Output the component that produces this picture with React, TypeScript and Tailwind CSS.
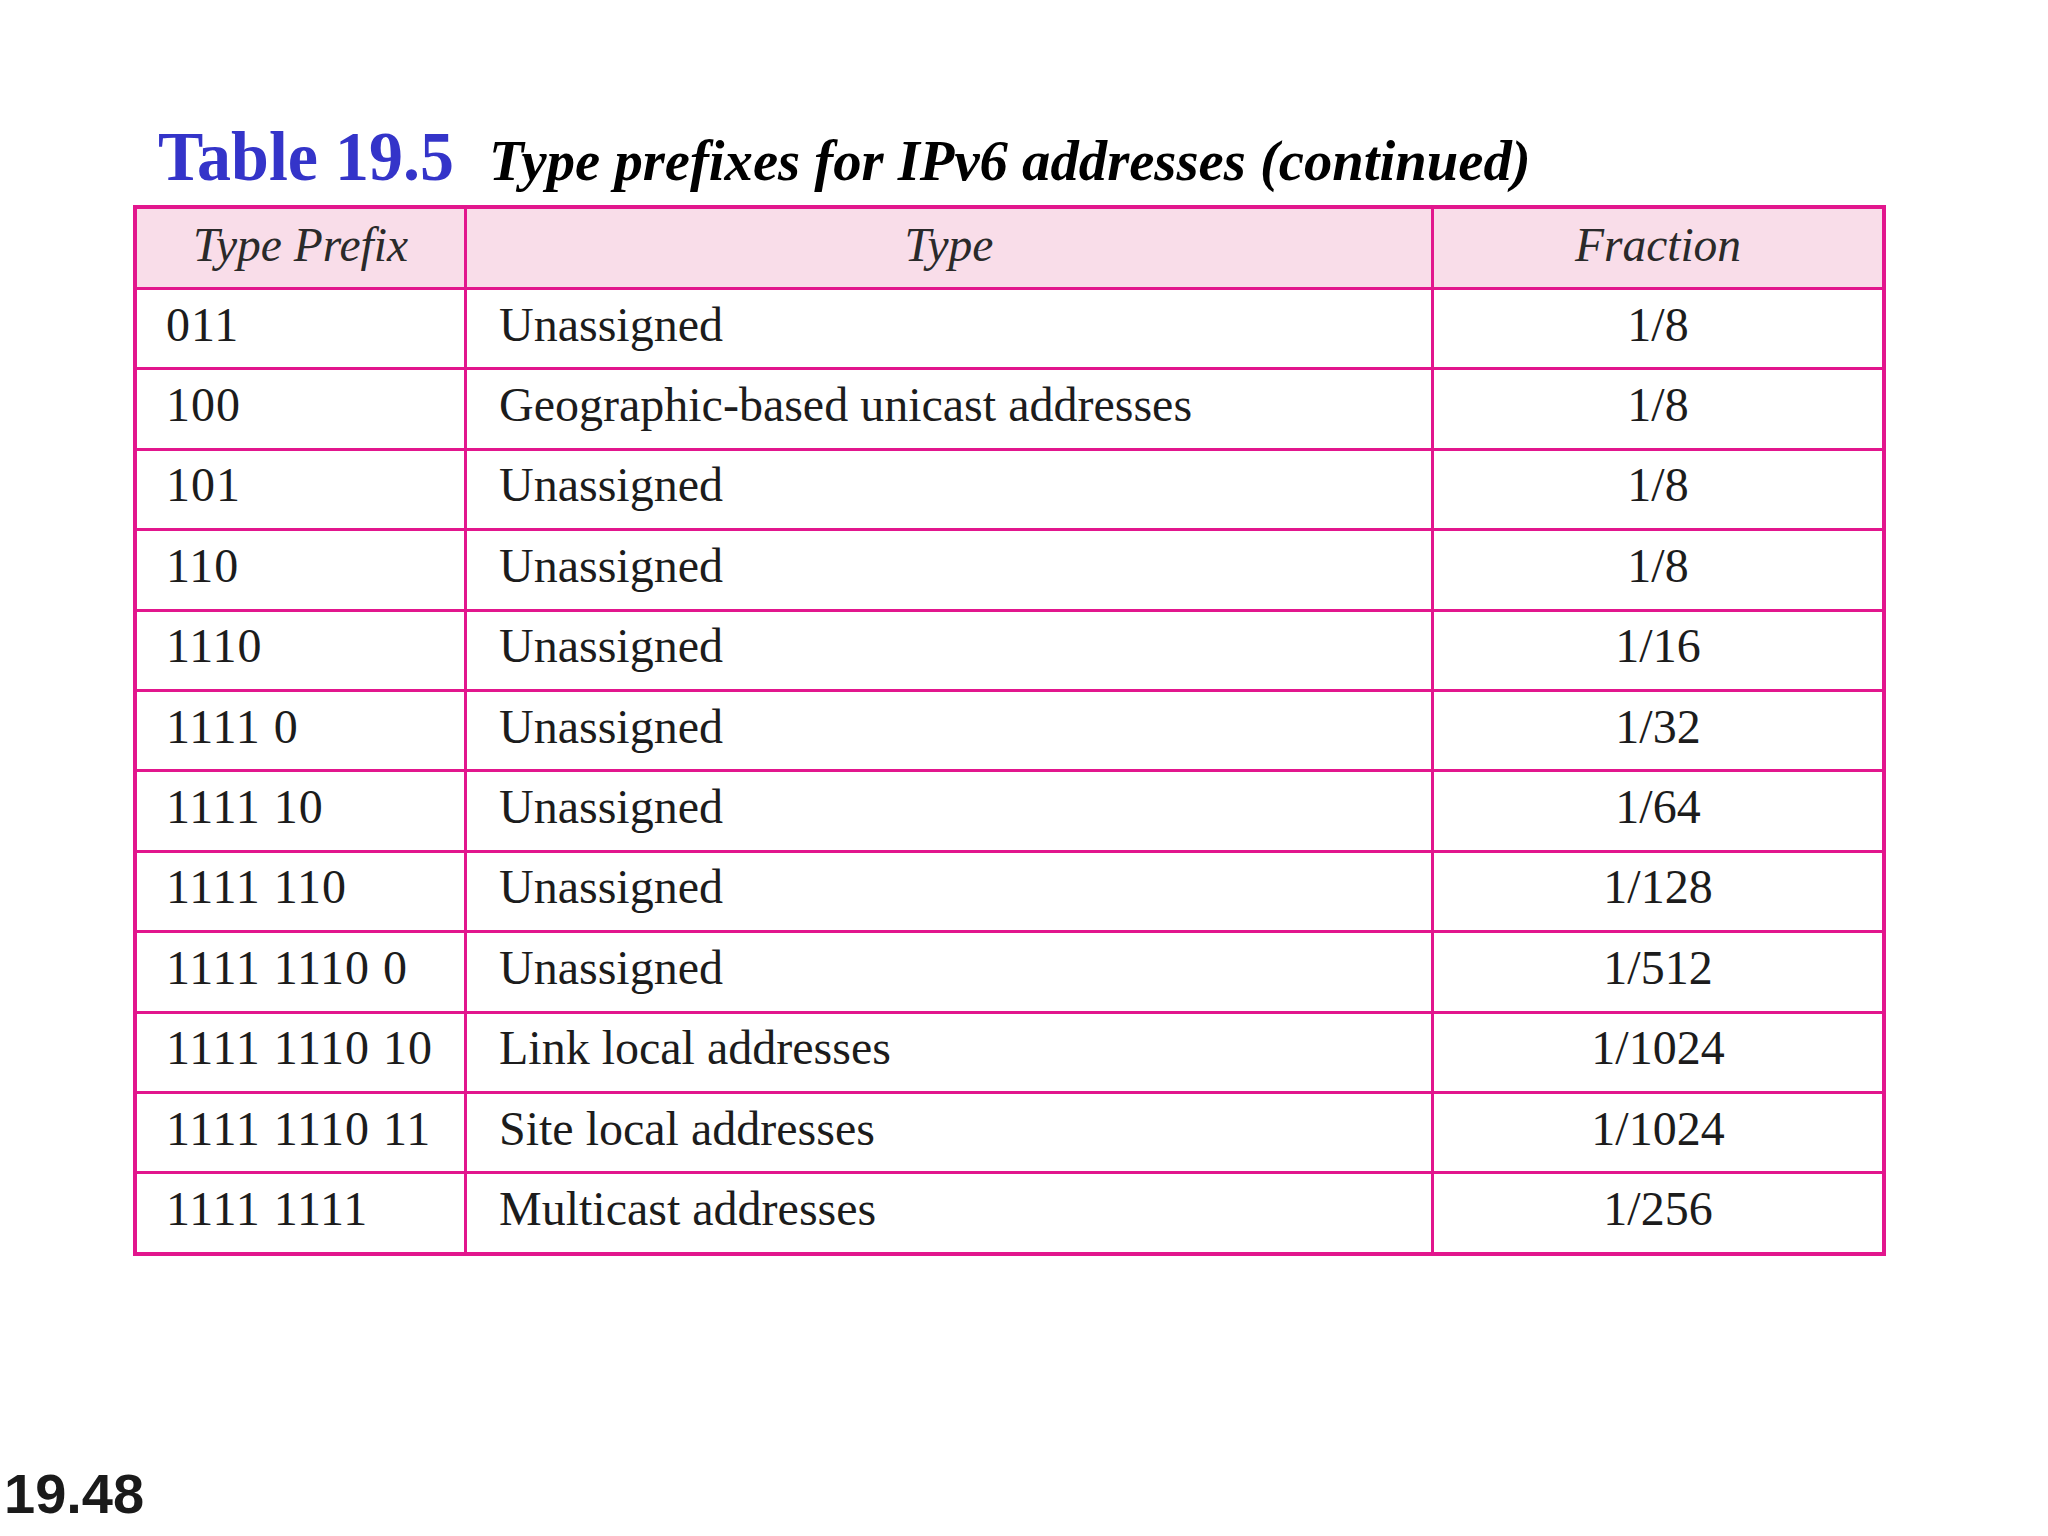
const rows: [string, string, string][] = [
  ["011", "Unassigned", "1/8"],
  ["100", "Geographic-based unicast addresses", "1/8"],
  ["101", "Unassigned", "1/8"],
  ["110", "Unassigned", "1/8"],
  ["1110", "Unassigned", "1/16"],
  ["1111 0", "Unassigned", "1/32"],
  ["1111 10", "Unassigned", "1/64"],
  ["1111 110", "Unassigned", "1/128"],
  ["1111 1110 0", "Unassigned", "1/512"],
  ["1111 1110 10", "Link local addresses", "1/1024"],
  ["1111 1110 11", "Site local addresses", "1/1024"],
  ["1111 1111", "Multicast addresses", "1/256"],
];

const serif = "font-['Liberation_Serif','Times_New_Roman',serif]";

/** Slide 19.48: IPv6 type prefix table, continued. */
export default function App() {
  return (
    <div className={`flex h-[1536px] w-[2048px] flex-col overflow-hidden bg-white ${serif}`}>
      <div className="ml-[158px] mt-[123px] flex items-baseline leading-none">
        <span className="inline-block origin-bottom scale-y-[1.03] text-[68px] font-bold text-[#3434c9]">Table 19.5</span>
        <span className="ml-[35px] text-[56.7px] font-bold italic text-black">
          Type prefixes for IPv6 addresses (continued)
        </span>
      </div>

      <div className="ml-[133px] mt-[14px] w-[1753px] border-4 border-[#e2168d]">
        <div className="grid h-[78px] grid-cols-[327px_967px_1fr] bg-[#f9dde9] text-[47.5px] italic leading-none text-[#2a2a2a]">
          <div className="flex items-center justify-center pb-[4px]">Type Prefix</div>
          <div className="flex items-center justify-center border-l-[3px] border-[#e2168d] pb-[4px]">Type</div>
          <div className="flex items-center justify-center border-l-[3px] border-[#e2168d] pb-[4px]">Fraction</div>
        </div>
        {rows.map(([prefix, type, fraction], i) => (
          <div
            key={i}
            className="grid h-[80.4px] grid-cols-[327px_967px_1fr] border-t-[3px] border-[#e2168d] text-[48px] leading-none text-[#1c1c1c]"
          >
            <div className="flex items-center pb-[8px] pl-[29px] tracking-[1px]">{prefix}</div>
            <div className="flex items-center border-l-[3px] border-[#e2168d] pb-[8px] pl-[32px]">{type}</div>
            <div className="flex items-center justify-center border-l-[3px] border-[#e2168d] pb-[8px]">{fraction}</div>
          </div>
        ))}
      </div>

      <div className="mb-[14px] ml-[4px] mt-auto font-['Liberation_Sans',Arial,sans-serif] text-[56px] font-bold leading-none text-[#1a1a1a]">
        19.48
      </div>
    </div>
  );
}
